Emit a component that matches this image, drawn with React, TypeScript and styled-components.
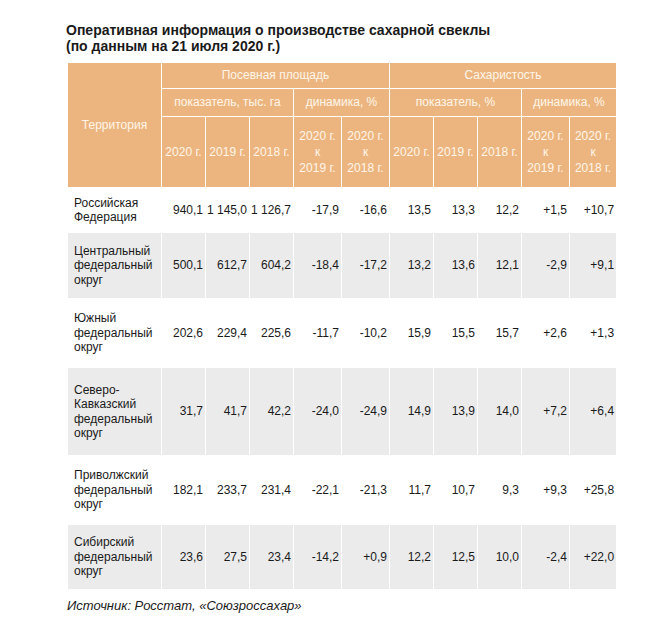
import React from "react";
import styled, { createGlobalStyle } from "styled-components";

const GlobalStyle = createGlobalStyle`
  html, body {
    margin: 0;
    padding: 0;
    background: #ffffff;
  }
  body {
    font-family: "Liberation Sans", Arial, sans-serif;
    color: #1a1a1a;
  }
`;

const Page = styled.div`
  width: 651px;
  height: 623px;
  box-sizing: border-box;
  padding: 22px 0 0 66px;
  background: #ffffff;
`;

const Title = styled.h1`
  margin: 0;
  font-family: "Liberation Sans", Arial, sans-serif;
  font-size: 14px;
  line-height: 16px;
  font-weight: 700;
  color: #1a1a1a;
`;

const Table = styled.table`
  margin: 8px 0 0 1px;
  width: 549px;
  table-layout: fixed;
  border-collapse: collapse;
  font-family: "Liberation Sans", Arial, sans-serif;
  font-size: 12px;
  line-height: 14.5px;
`;

const HeadCell = styled.th<{ $multi?: boolean }>`
  background: #ecb57f;
  color: #fff5ea;
  font-weight: 400;
  text-align: center;
  vertical-align: middle;
  border: 1px solid #ffffff;
  padding: 0;
  line-height: ${(p) => (p.$multi ? "16px" : "14.5px")};
  white-space: nowrap;
`;

const HeadRow = styled.tr<{ $h: number }>`
  height: ${(p) => p.$h}px;
`;

const Row = styled.tr<{ $shade: boolean; $h: number }>`
  height: ${(p) => p.$h}px;
  background: ${(p) => (p.$shade ? "#ebebeb" : "#ffffff")};
`;

const NameCell = styled.td`
  border: 1px solid #ffffff;
  padding: 0 0 0 6px;
  text-align: left;
  vertical-align: middle;
  color: #1a1a1a;
`;

const NumCell = styled.td`
  border: 1px solid #ffffff;
  padding: 0 2px 0 0;
  text-align: right;
  vertical-align: middle;
  white-space: nowrap;
  color: #1a1a1a;
`;

const Source = styled.p`
  margin: 8px 0 0 1px;
  font-family: "Liberation Sans", Arial, sans-serif;
  font-style: italic;
  font-size: 13px;
  line-height: 15px;
  color: #1a1a1a;
`;

type DataRow = { name: string[]; values: string[]; h: number };

const nb = "\u00a0";

const rows: DataRow[] = [
  {
    name: ["Российская", "Федерация"],
    values: ["940,1", `1${nb}145,0`, `1${nb}126,7`, "-17,9", "-16,6", "13,5", "13,3", "12,2", "+1,5", "+10,7"],
    h: 45,
  },
  {
    name: ["Центральный", "федеральный", "округ"],
    values: ["500,1", "612,7", "604,2", "-18,4", "-17,2", "13,2", "13,6", "12,1", "-2,9", "+9,1"],
    h: 66,
  },
  {
    name: ["Южный", "федеральный", "округ"],
    values: ["202,6", "229,4", "225,6", "-11,7", "-10,2", "15,9", "15,5", "15,7", "+2,6", "+1,3"],
    h: 69,
  },
  {
    name: ["Северо-", "Кавказский", "федеральный", "округ"],
    values: ["31,7", "41,7", "42,2", "-24,0", "-24,9", "14,9", "13,9", "14,0", "+7,2", "+6,4"],
    h: 88,
  },
  {
    name: ["Приволжский", "федеральный", "округ"],
    values: ["182,1", "233,7", "231,4", "-22,1", "-21,3", "11,7", "10,7", "9,3", "+9,3", "+25,8"],
    h: 69,
  },
  {
    name: ["Сибирский", "федеральный", "округ"],
    values: ["23,6", "27,5", "23,4", "-14,2", "+0,9", "12,2", "12,5", "10,0", "-2,4", "+22,0"],
    h: 65,
  },
];

const colWidths = [94, 44, 44, 44, 48, 48, 44, 44, 44, 48, 47];

const YearHead = () => (
  <>
    <HeadCell>2020 г.</HeadCell>
    <HeadCell>2019 г.</HeadCell>
    <HeadCell>2018 г.</HeadCell>
    <HeadCell $multi>
      2020 г.
      <br />к<br />
      2019 г.
    </HeadCell>
    <HeadCell $multi>
      2020 г.
      <br />к<br />
      2018 г.
    </HeadCell>
  </>
);

export default function App() {
  return (
    <>
      <GlobalStyle />
      <Page>
        <Title>
          Оперативная информация о производстве сахарной свеклы
          <br />
          (по данным на 21 июля 2020 г.)
        </Title>
        <Table>
          <colgroup>
            {colWidths.map((w, i) => (
              <col key={i} style={{ width: w }} />
            ))}
          </colgroup>
          <thead>
            <HeadRow $h={26}>
              <HeadCell rowSpan={3}>Территория</HeadCell>
              <HeadCell colSpan={5}>Посевная площадь</HeadCell>
              <HeadCell colSpan={5}>Сахаристость</HeadCell>
            </HeadRow>
            <HeadRow $h={28}>
              <HeadCell colSpan={3}>показатель, тыс. га</HeadCell>
              <HeadCell colSpan={2}>динамика, %</HeadCell>
              <HeadCell colSpan={3}>показатель, %</HeadCell>
              <HeadCell colSpan={2}>динамика, %</HeadCell>
            </HeadRow>
            <HeadRow $h={71}>
              <YearHead />
              <YearHead />
            </HeadRow>
          </thead>
          <tbody>
            {rows.map((r, i) => (
              <Row key={i} $shade={i % 2 === 1} $h={r.h}>
                <NameCell>
                  {r.name.map((line, j) => (
                    <React.Fragment key={j}>
                      {j > 0 && <br />}
                      {line}
                    </React.Fragment>
                  ))}
                </NameCell>
                {r.values.map((v, j) => (
                  <NumCell key={j}>{v}</NumCell>
                ))}
              </Row>
            ))}
          </tbody>
        </Table>
        <Source>Источник: Росстат, «Союзроссахар»</Source>
      </Page>
    </>
  );
}
